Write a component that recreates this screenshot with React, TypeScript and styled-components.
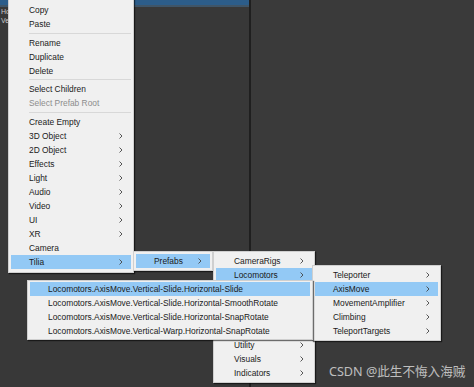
import React from 'react'
import styled, { createGlobalStyle } from 'styled-components'

const GlobalStyle = createGlobalStyle`
  html, body {
    margin: 0;
    padding: 0;
    background: #393939;
  }
`

const Screen = styled.div`
  position: relative;
  width: 474px;
  height: 387px;
  overflow: hidden;
  display: flex;
  background: #393939;
  font-family: 'Liberation Sans', Arial, sans-serif;
`

const HierarchyPanel = styled.div`
  width: 249px;
  display: flex;
  flex-direction: column;
  background: #383838;
`

const HierRow = styled.div<{ $selected?: boolean }>`
  height: ${({ $selected }) => ($selected ? 5 : 9)}px;
  line-height: 9px;
  padding-left: 1px;
  font-size: 7px;
  white-space: nowrap;
  overflow: hidden;
  color: #c8c8c8;
  background: ${({ $selected }) => ($selected ? '#2c5d8a' : 'transparent')};
  border-bottom: ${({ $selected }) => ($selected ? '2px solid #3f5568' : 'none')};
`

const Divider = styled.div`
  width: 2px;
  background: #1f1f1f;
`

const ScenePanel = styled.div`
  flex: 1;
  background: #3a3a3a;
`

const Menu = styled.div<{ $x: number; $y: number; $w: number; $pad?: number }>`
  position: absolute;
  left: ${({ $x }) => $x}px;
  top: ${({ $y }) => $y}px;
  width: ${({ $w }) => $w}px;
  box-sizing: border-box;
  padding: ${({ $pad = 2 }) => $pad}px 0;
  background: #f0f0f0;
  border: 1px solid #cfcfcf;
  box-shadow: 1px 1px 1px rgba(0, 0, 0, 0.55);
  display: flex;
  flex-direction: column;
`

const Item = styled.div<{ $active?: boolean; $disabled?: boolean }>`
  height: 14px;
  margin: 0 2px;
  padding: 0 8px 0 18px;
  display: flex;
  align-items: center;
  justify-content: space-between;
  font-size: 8.4px;
  white-space: nowrap;
  color: ${({ $disabled }) => ($disabled ? '#8d8d8d' : '#1a1a1a')};
  background: ${({ $active }) => ($active ? '#93c9f5' : 'transparent')};
`

const Separator = styled.div`
  height: 4.5px;
  margin: 0 2px 0 20px;
  display: flex;
  align-items: center;

  &::after {
    content: '';
    flex: 1;
    height: 1px;
    background: #d8d8d8;
  }
`

const Watermark = styled.div`
  position: absolute;
  left: 329px;
  top: 362px;
  font-family: 'Noto Sans', 'Noto Sans CJK SC', sans-serif;
  font-size: 12.6px;
  line-height: 20px;
  color: rgba(235, 235, 235, 0.75);
  white-space: nowrap;
`

const Arrow = () => (
  <svg width="4" height="6" viewBox="0 0 4 6">
    <polyline points="0.5,0.5 3,3 0.5,5.5" fill="none" stroke="#454545" strokeWidth="0.9" />
  </svg>
)

type Entry = { label?: string; sub?: boolean; active?: boolean; disabled?: boolean; sep?: boolean }

const MenuItems = ({ entries }: { entries: Entry[] }) => (
  <>
    {entries.map((e, i) =>
      e.sep ? (
        <Separator key={i} />
      ) : (
        <Item key={i} $active={e.active} $disabled={e.disabled}>
          <span>{e.label}</span>
          {e.sub && <Arrow />}
        </Item>
      )
    )}
  </>
)

const mainEntries: Entry[] = [
  { label: 'Copy' },
  { label: 'Paste' },
  { sep: true },
  { label: 'Rename' },
  { label: 'Duplicate' },
  { label: 'Delete' },
  { sep: true },
  { label: 'Select Children' },
  { label: 'Select Prefab Root', disabled: true },
  { sep: true },
  { label: 'Create Empty' },
  { label: '3D Object', sub: true },
  { label: '2D Object', sub: true },
  { label: 'Effects', sub: true },
  { label: 'Light', sub: true },
  { label: 'Audio', sub: true },
  { label: 'Video', sub: true },
  { label: 'UI', sub: true },
  { label: 'XR', sub: true },
  { label: 'Camera' },
  { label: 'Tilia', sub: true, active: true },
]

const prefabEntries: Entry[] = [{ label: 'Prefabs', sub: true, active: true }]

// the middle four rows sit under the AxisMove popup
const groupEntries: Entry[] = [
  { label: 'CameraRigs', sub: true },
  { label: 'Locomotors', sub: true, active: true },
  {},
  {},
  {},
  {},
  { label: 'Utility', sub: true },
  { label: 'Visuals', sub: true },
  { label: 'Indicators', sub: true },
]

const locomotorEntries: Entry[] = [
  { label: 'Teleporter', sub: true },
  { label: 'AxisMove', sub: true, active: true },
  { label: 'MovementAmplifier', sub: true },
  { label: 'Climbing', sub: true },
  { label: 'TeleportTargets', sub: true },
]

const axisEntries: Entry[] = [
  { label: 'Locomotors.AxisMove.Vertical-Slide.Horizontal-Slide', active: true },
  { label: 'Locomotors.AxisMove.Vertical-Slide.Horizontal-SmoothRotate' },
  { label: 'Locomotors.AxisMove.Vertical-Slide.Horizontal-SnapRotate' },
  { label: 'Locomotors.AxisMove.Vertical-Warp.Horizontal-SnapRotate' },
]

const App = () => (
  <>
    <GlobalStyle />
    <Screen>
      <HierarchyPanel>
        <HierRow $selected />
        <HierRow>Horizontal</HierRow>
        <HierRow>Vertical</HierRow>
      </HierarchyPanel>
      <Divider />
      <ScenePanel />

      <Menu $x={8} $y={-1} $w={126} $pad={3}>
        <MenuItems entries={mainEntries} />
      </Menu>
      <Menu $x={133} $y={251} $w={80} $pad={2}>
        <MenuItems entries={prefabEntries} />
      </Menu>
      <Menu $x={213} $y={251} $w={102} $pad={2}>
        <MenuItems entries={groupEntries} />
      </Menu>
      <Menu $x={312} $y={265} $w={129} $pad={2}>
        <MenuItems entries={locomotorEntries} />
      </Menu>
      <Menu $x={27} $y={280} $w={286} $pad={1}>
        <MenuItems entries={axisEntries} />
      </Menu>

      <Watermark>CSDN @此生不悔入海贼</Watermark>
    </Screen>
  </>
)

export default App
